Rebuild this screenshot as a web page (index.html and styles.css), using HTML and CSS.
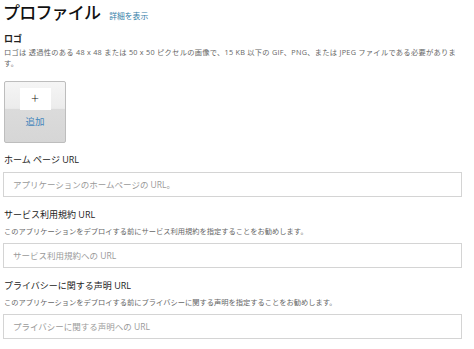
FILE: index.html
```html
<!DOCTYPE html>
<html lang="ja">
<head>
    <meta charset="UTF-8">
    <title>プロファイル</title>
    <link rel="stylesheet" href="styles.css">
</head>
<body>
    <div class="page">
        <div class="header">
            <h1 class="title">プロファイル</h1>
            <a class="details-link" href="#">詳細を表示</a>
        </div>

        <div class="logo-field">
            <div class="label">ロゴ</div>
            <p class="hint">ロゴは 透過性のある 48 x 48 または 50 x 50 ピクセルの画像で、15 KB 以下の GIF、PNG、または JPEG ファイルである必要があります。</p>
            <div class="logo-box">
                <div class="logo-slot">+</div>
                <span class="logo-add">追加</span>
            </div>
        </div>

        <div class="field">
            <div class="label">ホーム ページ URL</div>
            <input class="text-input" type="text" placeholder="アプリケーションのホームページの URL。">
        </div>

        <div class="field">
            <div class="label">サービス利用規約 URL</div>
            <p class="hint">このアプリケーションをデプロイする前にサービス利用規約を指定することをお勧めします。</p>
            <input class="text-input" type="text" placeholder="サービス利用規約への URL">
        </div>

        <div class="field">
            <div class="label">プライバシーに関する声明 URL</div>
            <p class="hint">このアプリケーションをデプロイする前にプライバシーに関する声明を指定することをお勧めします。</p>
            <input class="text-input" type="text" placeholder="プライバシーに関する声明への URL">
        </div>
    </div>
</body>
</html>
```

FILE: styles.css
```css
* {
    margin: 0;
    padding: 0;
    box-sizing: border-box;
}

body {
    font-family: "Open Sans", "Noto Sans CJK JP", sans-serif;
    background: #ffffff;
    color: #222222;
}

.page {
    padding: 0 12px 0 3px;
}

.header {
    display: flex;
    align-items: baseline;
    gap: 9px;
    height: 30px;
}

.title {
    font-size: 17px;
    font-weight: 500;
    line-height: 26px;
    letter-spacing: -0.8px;
    color: #111111;
}

.details-link {
    font-size: 7.8px;
    color: #337ea8;
    text-decoration: none;
}

.field {
    margin-top: 11px;
}

.label {
    font-size: 9px;
    line-height: 14px;
    color: #222222;
    padding-left: 1px;
}

.logo-field .label {
    font-weight: bold;
    margin-top: 2px;
}

.hint {
    font-size: 7.25px;
    line-height: 11px;
    color: #666666;
    padding-left: 1px;
    margin-top: 4px;
}

.logo-field .hint {
    margin-top: 1px;
    letter-spacing: 0.27px;
}

.logo-box {
    width: 62px;
    height: 62px;
    margin: 12px 0 0 1px;
    border: 1px solid #bdbdbd;
    border-radius: 2px;
    background: linear-gradient(#f5f5f5 0%, #ececec 44%, #dbdbdb 45%, #d6d6d6 100%);
    display: flex;
    flex-direction: column;
    align-items: center;
    padding-top: 6px;
}

.logo-slot {
    width: 31px;
    height: 22px;
    background: #ffffff;
    font-size: 14px;
    font-weight: 300;
    line-height: 22px;
    text-align: center;
    color: #111111;
}

.logo-add {
    margin-top: 4px;
    font-size: 9.5px;
    color: #4686bb;
}

.logo-field + .field {
    margin-top: 10px;
}

.text-input {
    display: block;
    width: 100%;
    height: 25px;
    margin-top: 5px;
    border: 1px solid #d4d4d4;
    padding: 0 9px;
    font-family: inherit;
    font-size: 8.5px;
    color: #222222;
    outline: none;
}

.hint + .text-input {
    margin-top: 6px;
}

.text-input::placeholder {
    color: #9a9a9a;
}
```
